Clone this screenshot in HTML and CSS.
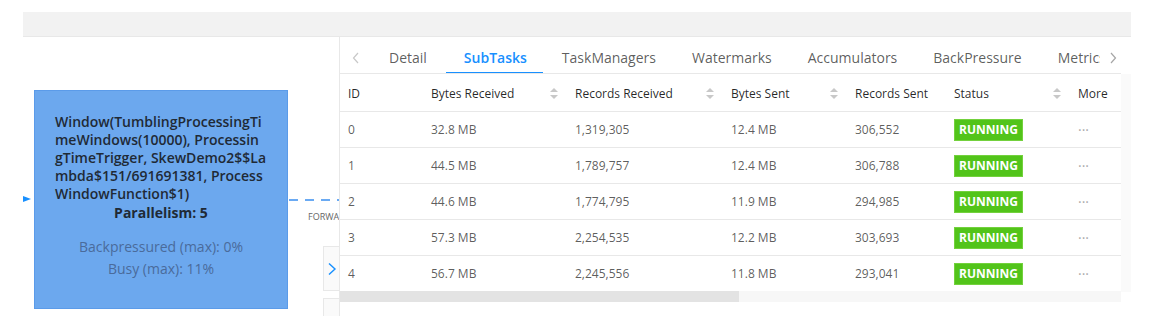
FILE: index.html
```html
<!DOCTYPE html>
<html lang="en">
<head>
    <meta charset="UTF-8">
    <meta name="viewport" content="width=device-width, initial-scale=1.0">
    <title>Job Vertex SubTasks</title>
    <link rel="stylesheet" href="styles.css">
</head>
<body>
    <div class="page">
        <div class="top-bar"></div>
        <div class="main">
            <!-- job graph canvas -->
            <div class="graph">
                <div class="edge-in"></div>
                <div class="node">
                    <div class="node-name">
                        <span>Window(TumblingProcessingTi</span>
                        <span>meWindows(10000), Processin</span>
                        <span>gTimeTrigger, SkewDemo2$$La</span>
                        <span>mbda$151/691691381, Process</span>
                        <span>WindowFunction$1)</span>
                    </div>
                    <div class="node-parallel">Parallelism: 5</div>
                    <div class="node-stat">Backpressured (max): 0%</div>
                    <div class="node-stat">Busy (max): 11%</div>
                </div>
                <div class="edge-out"></div>
                <div class="edge-label">FORWARD</div>
                <div class="drawer-toggle">
                    <svg width="10" height="14" viewBox="0 0 10 14"><path d="M2 1.5 L8 7 L2 12.5" fill="none" stroke="#1890ff" stroke-width="1.4"/></svg>
                </div>
                <div class="drawer-toggle second"></div>
            </div>

            <!-- detail drawer -->
            <div class="panel">
                <div class="tabs">
                    <div class="tab-arrow prev">
                        <svg width="8" height="12" viewBox="0 0 8 12"><path d="M6 1 L1.5 6 L6 11" fill="none" stroke="#c8c8c8" stroke-width="1.2"/></svg>
                    </div>
                    <div class="tab-list">
                        <div class="tab">Detail</div>
                        <div class="tab active">SubTasks</div>
                        <div class="tab">TaskManagers</div>
                        <div class="tab">Watermarks</div>
                        <div class="tab">Accumulators</div>
                        <div class="tab">BackPressure</div>
                        <div class="tab">Metrics</div>
                        <div class="tab">FlameGraph</div>
                    </div>
                    <div class="tab-arrow next">
                        <svg width="8" height="12" viewBox="0 0 8 12"><path d="M2 1 L6.5 6 L2 11" fill="none" stroke="#a6a6a6" stroke-width="1.2"/></svg>
                    </div>
                </div>
                <div class="table-area">
                    <div class="table-wrap">
                        <table class="subtasks">
                            <colgroup>
                                <col style="width:83px">
                                <col style="width:144px">
                                <col style="width:156px">
                                <col style="width:124px">
                                <col style="width:99px">
                                <col style="width:124px">
                                <col style="width:51px">
                            </colgroup>
                            <thead>
                                <tr>
                                    <th>ID</th>
                                    <th><div class="th-sort">Bytes Received<span class="sorter"></span></div></th>
                                    <th><div class="th-sort">Records Received<span class="sorter"></span></div></th>
                                    <th><div class="th-sort">Bytes Sent<span class="sorter"></span></div></th>
                                    <th>Records Sent</th>
                                    <th><div class="th-sort">Status<span class="sorter"></span></div></th>
                                    <th>More</th>
                                </tr>
                            </thead>
                            <tbody>
                                <tr>
                                    <td>0</td><td>32.8 MB</td><td>1,319,305</td><td>12.4 MB</td><td>306,552</td>
                                    <td><span class="tag">RUNNING</span></td><td class="more">···</td>
                                </tr>
                                <tr>
                                    <td>1</td><td>44.5 MB</td><td>1,789,757</td><td>12.4 MB</td><td>306,788</td>
                                    <td><span class="tag">RUNNING</span></td><td class="more">···</td>
                                </tr>
                                <tr>
                                    <td>2</td><td>44.6 MB</td><td>1,774,795</td><td>11.9 MB</td><td>294,985</td>
                                    <td><span class="tag">RUNNING</span></td><td class="more">···</td>
                                </tr>
                                <tr>
                                    <td>3</td><td>57.3 MB</td><td>2,254,535</td><td>12.2 MB</td><td>303,693</td>
                                    <td><span class="tag">RUNNING</span></td><td class="more">···</td>
                                </tr>
                                <tr>
                                    <td>4</td><td>56.7 MB</td><td>2,245,556</td><td>11.8 MB</td><td>293,041</td>
                                    <td><span class="tag">RUNNING</span></td><td class="more">···</td>
                                </tr>
                            </tbody>
                        </table>
                        <div class="h-scroll"><div class="h-thumb"></div></div>
                    </div>
                    <div class="v-track"></div>
                </div>
            </div>
        </div>
    </div>
</body>
</html>
```

FILE: styles.css
```css
body {
    margin: 0;
    font-family: "Open Sans", "Noto Sans", sans-serif;
    background: #fff;
    color: rgba(0, 0, 0, 0.65);
}

.page {
    margin-left: 23px;
    padding-top: 12px;
    width: 1108px;
    height: 304px;
    overflow: hidden;
}

.top-bar {
    height: 24px;
    background-color: #f2f2f2;
    border-bottom: 1px solid #e8e8e8;
}

.main {
    display: flex;
    height: 279px;
}

/* graph canvas */
.graph {
    position: relative;
    width: 316px;
    flex: none;
    overflow: hidden;
}

.node {
    position: absolute;
    left: 11px;
    top: 53px;
    width: 232px;
    height: 195px;
    background-color: #6ca8ee;
    border: 1px solid #5b9be9;
    padding: 22px 0 0 20px;
}

.node-name {
    font-size: 14px;
    font-weight: 600;
    line-height: 18px;
    color: #1f2a36;
}

.node-name span {
    display: block;
    white-space: nowrap;
}

.node-parallel {
    margin-left: -20px;
    width: 252px;
    text-align: center;
    font-size: 14px;
    font-weight: 700;
    line-height: 20px;
    color: #1f2a36;
}

.node-stat {
    margin-left: -20px;
    width: 252px;
    text-align: center;
    font-size: 14px;
    line-height: 22px;
    color: #4a6b9b;
}

.node-parallel + .node-stat {
    margin-top: 13px;
}

.edge-in {
    position: absolute;
    left: 0;
    top: 159px;
    width: 0;
    height: 0;
    border-top: 3.5px solid transparent;
    border-bottom: 3.5px solid transparent;
    border-left: 8px solid #1890ff;
}

.edge-out {
    position: absolute;
    left: 266px;
    top: 162px;
    width: 52px;
    height: 2px;
    background: repeating-linear-gradient(90deg, #6aaaf3 0 9px, transparent 9px 16px);
}

.edge-label {
    position: absolute;
    left: 285px;
    top: 173px;
    font-size: 9px;
    color: #666;
    white-space: nowrap;
}

.drawer-toggle {
    position: absolute;
    right: 0;
    top: 209px;
    width: 15px;
    height: 43px;
    background: #fafafa;
    border: 1px solid #e8e8e8;
    border-right: none;
    display: flex;
    align-items: center;
    justify-content: center;
}

.drawer-toggle.second {
    top: 261px;
    height: 30px;
}

/* drawer panel */
.panel {
    flex: 1;
    min-width: 0;
    border-left: 1px solid #e8e8e8;
    display: flex;
    flex-direction: column;
}

.tabs {
    display: flex;
    height: 31px;
    padding-top: 5px;
    width: 781px;
    border-bottom: 1px solid #e8e8e8;
}

.tab-arrow {
    flex: none;
    display: flex;
    align-items: center;
}

.tab-arrow.prev {
    width: 31px;
    justify-content: center;
}

.tab-arrow.next {
    width: 21px;
    justify-content: flex-end;
    padding-right: 4px;
    box-sizing: border-box;
}

.tab-list {
    flex: 1;
    display: flex;
    overflow: hidden;
}

.tab {
    position: relative;
    flex: none;
    padding: 0 18px;
    font-size: 14px;
    line-height: 31px;
    color: rgba(0, 0, 0, 0.65);
    white-space: nowrap;
}

.tab.active {
    color: #1890ff;
    font-weight: 600;
    padding: 0 17px 0 19px;
}

.tab.active::after {
    content: "";
    position: absolute;
    left: 1px;
    right: 1px;
    bottom: -1px;
    height: 2px;
    background: #1890ff;
}

.table-area {
    display: flex;
}

.table-wrap {
    width: 781px;
}

.v-track {
    width: 10px;
    height: 218px;
    background: #fafafa;
}

.subtasks {
    width: 781px;
    border-collapse: collapse;
    table-layout: fixed;
    font-size: 12px;
}

.subtasks th {
    height: 35px;
    padding: 2px 8px 0;
    text-align: left;
    font-weight: 400;
    color: rgba(0, 0, 0, 0.85);
    border-bottom: 1px solid #e8e8e8;
}

.th-sort {
    display: flex;
    align-items: center;
    justify-content: space-between;
}

.sorter {
    position: relative;
    width: 8px;
    height: 11px;
    margin-right: 1px;
}

.sorter::before,
.sorter::after {
    content: "";
    position: absolute;
    left: 0;
    border-left: 4px solid transparent;
    border-right: 4px solid transparent;
}

.sorter::before {
    top: 0;
    border-bottom: 4px solid #c8c8c8;
}

.sorter::after {
    bottom: 0;
    border-top: 4px solid #c8c8c8;
}

.subtasks td {
    height: 35px;
    padding: 0 8px;
    border-bottom: 1px solid #e8e8e8;
    white-space: nowrap;
}

.subtasks tbody tr:last-child td {
    border-bottom: none;
}

.tag {
    display: inline-block;
    width: 67px;
    height: 20px;
    line-height: 20px;
    text-align: center;
    background: #52c41a;
    border: 1px solid #73d13d;
    color: #fff;
    font-weight: 700;
    font-size: 12px;
}

.more {
    color: #aaa;
    font-size: 14px;
}

.h-scroll {
    height: 11px;
    background: #f7f7f7;
}

.h-thumb {
    width: 399px;
    height: 100%;
    background: #e3e3e3;
}
```
